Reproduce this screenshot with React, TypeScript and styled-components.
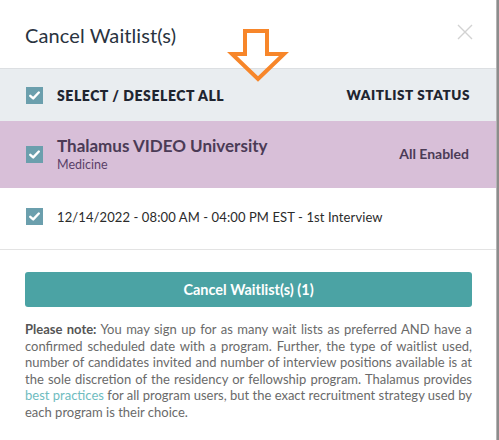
import React from "react";
import styled, { createGlobalStyle } from "styled-components";

const Global = createGlobalStyle`
  html, body { margin: 0; padding: 0; background: #8c8c8c; }
  body { font-family: "Lato", "Open Sans", "Liberation Sans", sans-serif; }
  * { box-sizing: border-box; }
`;

const Modal = styled.div`
  position: relative;
  width: 497px;
  height: 440px;
  background: #fff;
  border-right: 1px solid #b5b5b5;
`;

const Header = styled.div`
  height: 69px;
  display: flex;
  align-items: center;
  justify-content: space-between;
  padding: 0 23px 0 25px;
  border-bottom: 1px solid #dcdfe2;
`;

const Title = styled.h1`
  margin: 0;
  font-size: 20px;
  font-weight: 400;
  color: #2a3340;
  letter-spacing: 0.1px;
  padding-top: 2px;
`;

const Close = styled.button`
  border: 0;
  background: none;
  padding: 0;
  width: 16px;
  height: 16px;
  margin-top: -5px;
  display: flex;
  cursor: pointer;
`;

const Arrow = styled.svg`
  position: absolute;
  left: 226px;
  top: 25px;
`;

const SelectRow = styled.div`
  height: 52px;
  background: #e9edf0;
  display: flex;
  align-items: center;
  padding: 0 26px;
  gap: 14px;
`;

const HeadLabel = styled.span<{ $right?: boolean }>`
  font-size: ${(p) => (p.$right ? "13.5px" : "14px")};
  font-weight: 800;
  color: #1f2530;
  letter-spacing: ${(p) => (p.$right ? "0.6px" : "0.55px")};
  margin-left: ${(p) => (p.$right ? "auto" : "0")};
  margin-right: ${(p) => (p.$right ? "0" : "0")};
  margin-top: ${(p) => (p.$right ? "-1px" : "1px")};
`;

const ProgramRow = styled.div`
  height: 67px;
  background: #d8bfd8;
  display: flex;
  align-items: center;
  padding: 0 26px;
  gap: 14px;
`;

const ProgramInfo = styled.div`
  display: flex;
  flex-direction: column;
  margin-top: 0;
`;

const ProgramName = styled.span`
  font-size: 17px;
  font-weight: 700;
  color: #4b3b56;
  line-height: 20px;
`;

const ProgramSub = styled.span`
  font-size: 12.5px;
  color: #5a3f68;
  line-height: 18px;
`;

const Status = styled.span`
  margin-left: auto;
  margin-top: -3px;
  margin-right: 1px;
  font-size: 14px;
  font-weight: 700;
  color: #4b3b56;
`;

const SlotRow = styled.div`
  height: 62px;
  display: flex;
  align-items: center;
  padding: 0 26px 4px;
  gap: 14px;
  border-bottom: 1px solid #e3e3e3;
`;

const SlotText = styled.span`
  font-size: 13px;
  color: #2b2b2b;
  letter-spacing: 0.1px;
`;

const Footer = styled.div`
  padding: 22px 24px 0 25px;
`;

const CancelButton = styled.button`
  width: 100%;
  height: 35px;
  border: 0;
  border-radius: 3px;
  background: #4ba3a4;
  color: #fff;
  font-family: inherit;
  font-size: 14.5px;
  font-weight: 700;
  cursor: pointer;
`;

const Note = styled.p`
  margin: 14px 0 0;
  font-size: 13px;
  line-height: 16.6px;
  color: #6a6a6a;
  text-align: justify;
`;

const Strong = styled.strong`
  color: #555;
  font-weight: 700;
`;

const Link = styled.a`
  color: #6fbcbf;
  text-decoration: none;
`;

const Box = styled.span`
  width: 17px;
  height: 17px;
  flex: 0 0 17px;
  background: #6b9fad;
  display: flex;
  align-items: center;
  justify-content: center;
`;

const Check = () => (
  <Box>
    <svg width="11" height="9" viewBox="0 0 11 9">
      <path d="M1.3 4.8 L4.2 7.4 L9.8 1.5" fill="none" stroke="#fff" strokeWidth="2.4" strokeLinecap="round" strokeLinejoin="round" />
    </svg>
  </Box>
);

export default function App() {
  return (
    <>
      <Global />
      <Modal>
        <Header>
          <Title>Cancel Waitlist(s)</Title>
          <Close aria-label="close">
            <svg width="16" height="16" viewBox="0 0 16 16">
              <path d="M1 1 L15 15 M15 1 L1 15" stroke="#d2d2d2" strokeWidth="1.4" />
            </svg>
          </Close>
        </Header>
        <SelectRow>
          <Check />
          <HeadLabel>SELECT / DESELECT ALL</HeadLabel>
          <HeadLabel $right>WAITLIST STATUS</HeadLabel>
        </SelectRow>
        <ProgramRow>
          <Check />
          <ProgramInfo>
            <ProgramName>Thalamus VIDEO University</ProgramName>
            <ProgramSub>Medicine</ProgramSub>
          </ProgramInfo>
          <Status>All Enabled</Status>
        </ProgramRow>
        <SlotRow>
          <Check />
          <SlotText>12/14/2022 - 08:00 AM - 04:00 PM EST - 1st Interview</SlotText>
        </SlotRow>
        <Footer>
          <CancelButton>Cancel Waitlist(s) (1)</CancelButton>
          <Note>
            <Strong>Please note:</Strong> You may sign up for as many wait lists as preferred AND have a
            confirmed scheduled date with a program. Further, the type of waitlist used,
            number of candidates invited and number of interview positions available is at
            the sole discretion of the residency or fellowship program. Thalamus provides{" "}
            <Link href="#">best practices</Link> for all program users, but the exact recruitment
            strategy used by each program is their choice.
          </Note>
        </Footer>
        <Arrow width="64" height="60" viewBox="0 0 64 60">
          <path
            d="M19 6 L41 6 L41 29 L58 29 L32 54 L6 29 L19 29 Z"
            fill="none"
            stroke="#f7862a"
            strokeWidth="4"
            strokeLinejoin="miter"
          />
        </Arrow>
      </Modal>
    </>
  );
}
